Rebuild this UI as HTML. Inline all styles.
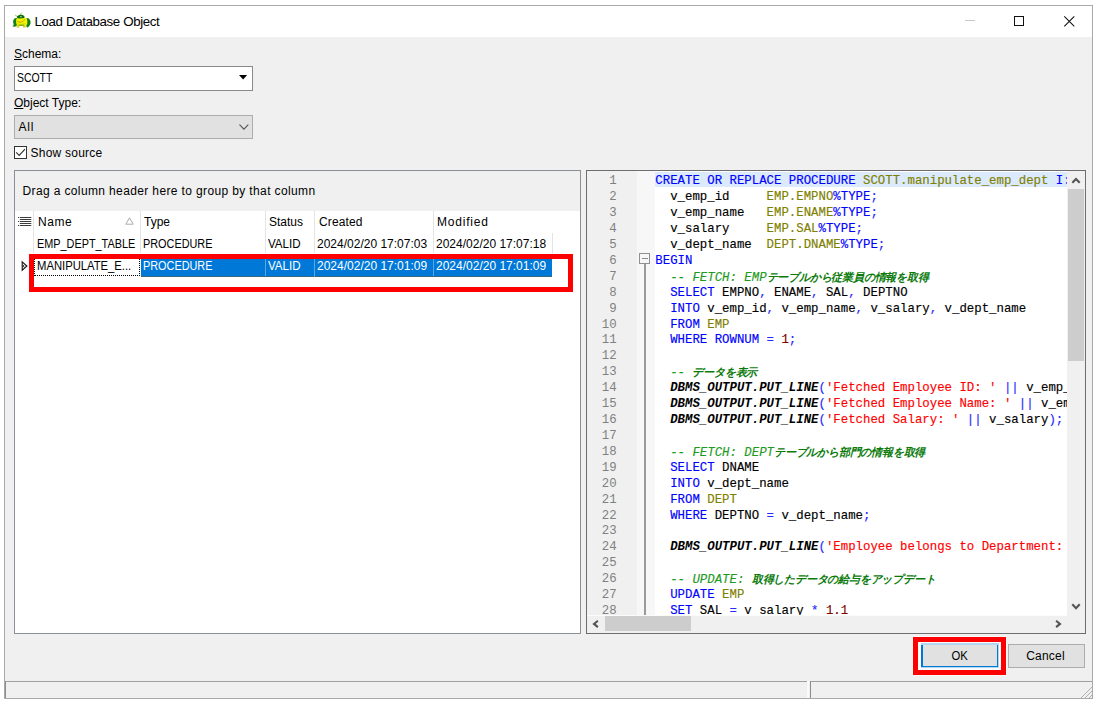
<!DOCTYPE html>
<html>
<head>
<meta charset="utf-8">
<title>Load Database Object</title>
<style>
html,body{margin:0;padding:0;background:#fff;}
body{width:1098px;height:706px;position:relative;overflow:hidden;font-family:"Liberation Sans",sans-serif;font-size:12px;color:#000;}
.abs{position:absolute;}
#win{position:absolute;left:4px;top:5px;width:1087px;height:692px;border:1px solid #a9a9a9;background:#f0f0f0;}
#title{position:absolute;left:0;top:0;width:1087px;height:31px;background:#fff;}
#ttext{position:absolute;font-size:13.3px;letter-spacing:-0.37px;line-height:16px;white-space:nowrap;}
.lbl{position:absolute;white-space:nowrap;line-height:16px;}
.lbl u{text-decoration:underline;text-decoration-thickness:1px;text-underline-offset:1px;}
#cb1{position:absolute;left:13.6px;top:66px;width:237.8px;height:23px;border:1px solid #8a8a8a;background:#fff;}
#cb2{position:absolute;left:13.6px;top:115px;width:237.8px;height:22px;border:1px solid #adadad;background:#e1e1e1;}
.cbt{position:absolute;left:3px;top:4px;line-height:16px;white-space:nowrap;}
#chk{position:absolute;left:13.5px;top:146px;width:11.6px;height:11.4px;border:1px solid #333;background:#fff;}
/* left panel */
#lp{position:absolute;left:13.5px;top:170px;width:567.3px;height:464px;border:1px solid #8a8f98;background:#fff;box-sizing:border-box;}
#grp{position:absolute;left:0;top:0;width:565px;height:40px;background:#f0f0f0;}
.hd{position:absolute;top:40px;height:22px;line-height:22px;white-space:nowrap;}
.vl{position:absolute;width:1px;background:#e4e4e4;}
.cell{position:absolute;height:22px;line-height:22px;white-space:nowrap;overflow:hidden;}
.sel{background:#0078d7;color:#fff;}
.sx{display:inline-block;transform-origin:0 50%;white-space:nowrap;}
/* right panel */
#rp{position:absolute;left:586px;top:170px;width:500px;height:464px;box-sizing:border-box;border:1px solid #6e6e6e;background:#f0f0f0;}
#code{position:absolute;left:587px;top:171px;width:479.5px;height:444px;overflow:hidden;background:#fff;font-family:"Liberation Mono",monospace;}
#gut{position:absolute;left:0;top:0;width:50px;height:444px;background:#f0f0f0;}
#fm{position:absolute;left:50px;top:0;width:17.5px;height:444px;background:#f7f7f7;}
#hl{position:absolute;left:68px;top:1px;width:412px;height:15px;background:#dbeafc;}
.ln{position:absolute;left:0;width:29.6px;height:16px;line-height:16px;text-align:right;color:#808080;font-size:12.37px;margin-top:1.3px;}
.cl{position:absolute;left:68.3px;height:16px;line-height:16px;white-space:pre;font-size:12.37px;color:#000;margin-top:1.3px;-webkit-text-stroke:0.15px;}
.k{color:#0000ff;}
.o{color:#2a2aff;}
.t{color:#808000;}
.n{color:#800000;}
.s{color:#ff0000;}
.c{color:#1e9a1e;font-style:italic;}
.j{color:#0a7a0a;font-style:italic;font-family:"Liberation Sans",sans-serif;font-size:11.1px;letter-spacing:-0.2px;font-weight:bold;-webkit-text-stroke:0;}
.f{font-weight:bold;font-style:italic;-webkit-text-stroke:0;}
#vsb{position:absolute;left:1066.5px;top:171px;width:18.5px;height:444px;background:#f0f0f0;}
#vth{position:absolute;left:1.5px;top:18px;width:16px;height:172px;background:#cdcdcd;}
#hsb{position:absolute;left:587px;top:615px;width:479.5px;height:18px;background:#f0f0f0;box-sizing:border-box;border-top:1px solid #fbfbfb;}
#hth{position:absolute;left:18px;top:0.3px;width:86px;height:15px;background:#cdcdcd;}
#cor{position:absolute;left:1066.5px;top:615px;width:18.5px;height:18px;background:#f0f0f0;}
.btn{position:absolute;box-sizing:border-box;background:#e1e1e1;text-align:center;line-height:16px;}
.red{position:absolute;box-sizing:border-box;border:5px solid #ff0000;}
svg{position:absolute;overflow:visible;}
</style>
</head>
<body>
<div id="win">
  <div id="title"></div>
</div>

<!-- title bar -->
<svg style="left:12px;top:12px" width="20" height="17" viewBox="0 0 20 17">
  <!-- antennae -->
  <path d="M3.4 3.2 L5.6 4.8 M9.6 1.0 L8.0 3.0" stroke="#7cc53c" stroke-width="0.9" stroke-linecap="round" fill="none"/>
  <!-- side bodies -->
  <path d="M4.2 5.9 C1.6 6.0 0.9 8.6 1.3 11.0 C1.5 12.6 2.4 13.6 2.0 14.6 C3.0 15.0 4.4 14.2 5.2 13.0 C5.0 10.6 5.0 8.0 5.6 6.0 Z" fill="#128212"/>
  <path d="M14.2 6.0 C16.8 5.6 18.4 7.6 18.6 10.2 C18.7 12.4 17.4 14.4 15.6 15.6 C14.6 15.2 14.0 14.2 14.2 12.8 C15.0 10.6 15.0 8.0 14.2 6.0 Z" fill="#128212"/>
  <!-- belly -->
  <path d="M4.6 6.6 C6.0 5.2 13.0 5.0 14.6 6.6 C15.8 8.6 15.6 12.0 14.4 13.6 C11.6 14.2 7.0 14.2 5.0 13.4 C3.8 11.2 3.8 8.6 4.6 6.6 Z" fill="#f4f000"/>
  <!-- head -->
  <path d="M4.8 5.4 C5.0 3.8 7.2 2.6 9.2 2.8 C11.4 3.0 12.8 4.2 12.6 5.6 C11.0 6.8 6.2 6.8 4.8 5.4 Z" fill="#0b6e0b"/>
  <ellipse cx="8.9" cy="4.7" rx="0.9" ry="0.6" fill="#b9d6b9"/>
  <!-- mouth / arm shading -->
  <path d="M5.4 9.4 C8.0 10.8 11.0 10.4 12.6 7.2" stroke="#a9a80e" stroke-width="1.0" fill="none"/>
  <path d="M5.6 12.0 C8.0 12.9 11.0 12.6 12.6 11.6" stroke="#c6c40a" stroke-width="0.8" fill="none"/>
  <!-- underside green -->
  <path d="M6.8 13.3 H12.4" stroke="#4aa31a" stroke-width="0.9"/>
  <!-- feet -->
  <path d="M4.6 13.4 L7.0 13.6 L7.6 15.6 L4.6 15.6 Z M11.4 13.8 L13.8 13.4 L13.6 15.6 L10.8 15.6 Z" fill="#d2cd10"/>
  <path d="M0.4 14.4 L2.0 12.6 L2.8 14.6 Z" fill="#1a7a1a"/>
</svg>
<div id="ttext" style="left:34.5px;top:14px;">Load Database Object</div>
<div class="abs" style="left:965px;top:20px;width:10px;height:1px;background:#c8c8c8;"></div>
<div class="abs" style="left:1014px;top:16px;width:8px;height:8px;border:1px solid #111;"></div>
<svg style="left:1064px;top:16px" width="11" height="11" viewBox="0 0 11 11"><path d="M0.3 0.3 L10.3 10.3 M10.3 0.3 L0.3 10.3" stroke="#111" stroke-width="1.05" fill="none"/></svg>

<!-- form -->
<div class="lbl" style="left:14px;top:46px;"><u>S</u>chema:</div>
<div id="cb1"><div class="cbt" style="left:2.2px;top:3px;"><span class="sx" style="transform:scaleX(0.87)">SCOTT</span></div></div>
<svg style="left:239.3px;top:75.4px" width="8.2" height="4.6" viewBox="0 0 8.2 4.6"><path d="M0 0 H8.2 L4.1 4.6 Z" fill="#000"/></svg>
<div class="lbl" style="left:14px;top:95px;"><u>O</u>bject Type:</div>
<div id="cb2"><div class="cbt" style="top:3px;left:3.9px;letter-spacing:0.8px;">All</div></div>
<svg style="left:239px;top:124px" width="10" height="6" viewBox="0 0 10 6"><path d="M0.5 0.7 L4.9 5.1 L9.3 0.7" stroke="#555" stroke-width="1.1" fill="none"/></svg>
<div id="chk"></div>
<svg style="left:15px;top:147px" width="11" height="11" viewBox="0 0 11 11"><path d="M1.2 5.4 L4.2 8.4 L10 2.2" stroke="#333" stroke-width="1.2" fill="none"/></svg>
<div class="lbl" style="left:30.5px;top:145px;letter-spacing:0.24px;">Show source</div>

<!-- left panel -->
<div id="lp">
  <div id="grp"></div>
  <div class="lbl" style="left:8px;top:12px;letter-spacing:0.37px;">Drag a column header here to group by that column</div>
</div>
<!-- header -->
<svg style="left:18px;top:216px" width="14" height="11" viewBox="0 0 14 11">
  <path d="M1.8 1.5 H13.3 M1.8 3.5 H13.3 M1.8 5.5 H13.3 M1.8 7.5 H13.3 M1.8 9.5 H13.3" stroke="#3c3c3c" stroke-width="1"/>
  <path d="M0 1.5 H1 M0 5.5 H1 M0 9.5 H1" stroke="#3c3c3c" stroke-width="1"/>
</svg>
<div class="hd" style="left:38px;top:211px;letter-spacing:0.55px;">Name</div>
<svg style="left:125px;top:217px" width="9" height="8" viewBox="0 0 9 8"><path d="M4.5 0.8 L8.2 7.2 H0.8 Z" stroke="#aaa" stroke-width="1" fill="none"/></svg>
<div class="hd" style="left:144px;top:211px;">Type</div>
<div class="hd" style="left:269px;top:211px;">Status</div>
<div class="hd" style="left:319px;top:211px;letter-spacing:0.13px;">Created</div>
<div class="hd" style="left:437px;top:211px;letter-spacing:0.78px;">Modified</div>
<div class="vl" style="left:33px;top:211px;height:44px;"></div>
<div class="vl" style="left:140px;top:211px;height:44px;"></div>
<div class="vl" style="left:265px;top:211px;height:44px;"></div>
<div class="vl" style="left:314px;top:211px;height:44px;"></div>
<div class="vl" style="left:433px;top:211px;height:44px;"></div>
<div class="vl" style="left:552px;top:233px;height:22px;"></div>
<!-- row 1 -->
<div class="cell" style="left:37px;top:233px;width:103px;"><span class="sx" style="transform:scaleX(0.905)">EMP_DEPT_TABLE</span></div>
<div class="cell" style="left:143px;top:233px;"><span class="sx" style="transform:scaleX(0.906)">PROCEDURE</span></div>
<div class="cell" style="left:268px;top:233px;"><span class="sx" style="transform:scaleX(0.965)">VALID</span></div>
<div class="cell" style="left:317px;top:233px;">2024/02/20 17:07:03</div>
<div class="cell" style="left:436px;top:233px;">2024/02/20 17:07:18</div>
<!-- row 2 -->
<div class="abs sel" style="left:141px;top:255px;width:411px;height:22px;"></div>
<div class="abs" style="left:265px;top:255px;width:1px;height:22px;background:#5aa7e6;"></div>
<div class="abs" style="left:314px;top:255px;width:1px;height:22px;background:#5aa7e6;"></div>
<div class="abs" style="left:433px;top:255px;width:1px;height:22px;background:#5aa7e6;"></div>
<div class="abs" style="left:34px;top:255px;width:106px;height:21px;border:1px dotted #000;box-sizing:border-box;border-top:none;border-left:1px dotted #000;"></div>
<div class="abs" style="left:141px;top:276px;width:411px;height:1px;border-top:1px dotted #6b5a2a;"></div>
<div class="cell" style="left:37px;top:255px;width:103px;"><span class="sx" style="transform:scaleX(0.938)">MANIPULATE_E...</span></div>
<div class="cell" style="left:143px;top:255px;color:#fff;"><span class="sx" style="transform:scaleX(0.906)">PROCEDURE</span></div>
<div class="cell" style="left:268px;top:255px;color:#fff;"><span class="sx" style="transform:scaleX(0.965)">VALID</span></div>
<div class="cell" style="left:317px;top:255px;color:#fff;">2024/02/20 17:01:09</div>
<div class="cell" style="left:436px;top:255px;color:#fff;">2024/02/20 17:01:09</div>
<svg style="left:21px;top:260px" width="8" height="12" viewBox="0 0 8 12"><path d="M1.2 1.8 L5.9 6 L1.2 10.2 Z" stroke="#111" stroke-width="1.1" fill="none"/><path d="M1.6 4.4 L3.6 6 L1.6 7.6 Z" fill="#111"/></svg>
<div class="red" style="left:29px;top:254px;width:544px;height:38px;box-shadow:0 0 0 1px rgba(255,255,255,.45);"></div>

<!-- right panel -->
<div id="rp"></div>
<div id="code">
  <div id="gut"></div>
  <div id="fm"></div>
  <div id="hl"></div>
  <div class="abs" style="left:52px;top:82px;width:9.4px;height:9.3px;border:1px solid #909090;background:#f7f7f7;"></div>
  <div class="abs" style="left:54.5px;top:87.2px;width:6.6px;height:1px;background:#8a8a8a;"></div>
  <div class="abs" style="left:57.2px;top:93.3px;width:1.4px;height:351px;background:#9a9a9a;"></div>
<div class="ln" style="top:1.00px">1</div>
<div class="ln" style="top:16.91px">2</div>
<div class="ln" style="top:32.83px">3</div>
<div class="ln" style="top:48.75px">4</div>
<div class="ln" style="top:64.66px">5</div>
<div class="ln" style="top:80.57px">6</div>
<div class="ln" style="top:96.49px">7</div>
<div class="ln" style="top:112.40px">8</div>
<div class="ln" style="top:128.32px">9</div>
<div class="ln" style="top:144.24px">10</div>
<div class="ln" style="top:160.15px">11</div>
<div class="ln" style="top:176.06px">12</div>
<div class="ln" style="top:191.98px">13</div>
<div class="ln" style="top:207.89px">14</div>
<div class="ln" style="top:223.81px">15</div>
<div class="ln" style="top:239.73px">16</div>
<div class="ln" style="top:255.64px">17</div>
<div class="ln" style="top:271.56px">18</div>
<div class="ln" style="top:287.47px">19</div>
<div class="ln" style="top:303.38px">20</div>
<div class="ln" style="top:319.30px">21</div>
<div class="ln" style="top:335.21px">22</div>
<div class="ln" style="top:351.13px">23</div>
<div class="ln" style="top:367.04px">24</div>
<div class="ln" style="top:382.96px">25</div>
<div class="ln" style="top:398.88px">26</div>
<div class="ln" style="top:414.79px">27</div>
<div class="ln" style="top:430.70px">28</div>
<div class="cl" style="top:1.00px"><span class="k">CREATE OR REPLACE PROCEDURE </span><span class="t">SCOTT.manipulate_emp_dept </span><span class="k">I</span><span class="o">:</span></div>
<div class="cl" style="top:16.91px">  v_emp_id     <span class="t">EMP.EMPNO</span><span class="k">%TYPE</span><span class="o">;</span></div>
<div class="cl" style="top:32.83px">  v_emp_name   <span class="t">EMP.ENAME</span><span class="k">%TYPE</span><span class="o">;</span></div>
<div class="cl" style="top:48.75px">  v_salary     <span class="t">EMP.SAL</span><span class="k">%TYPE</span><span class="o">;</span></div>
<div class="cl" style="top:64.66px">  v_dept_name  <span class="t">DEPT.DNAME</span><span class="k">%TYPE</span><span class="o">;</span></div>
<div class="cl" style="top:80.57px"><span class="k">BEGIN</span></div>
<div class="cl" style="top:96.49px">  <span class="c">-- FETCH: EMP</span><span class="j">テーブルから従業員の情報を取得</span></div>
<div class="cl" style="top:112.40px">  <span class="k">SELECT</span> EMPNO<span class="o">,</span> ENAME<span class="o">,</span> SAL<span class="o">,</span> DEPTNO</div>
<div class="cl" style="top:128.32px">  <span class="k">INTO</span> v_emp_id<span class="o">,</span> v_emp_name<span class="o">,</span> v_salary<span class="o">,</span> v_dept_name</div>
<div class="cl" style="top:144.24px">  <span class="k">FROM </span><span class="t">EMP</span></div>
<div class="cl" style="top:160.15px">  <span class="k">WHERE ROWNUM </span><span class="o">= </span><span class="n">1</span><span class="o">;</span></div>
<div class="cl" style="top:176.06px"></div>
<div class="cl" style="top:191.98px">  <span class="c">-- </span><span class="j">データを表示</span></div>
<div class="cl" style="top:207.89px">  <span class="f">DBMS_OUTPUT.PUT_LINE</span><span class="o">(</span><span class="s">&#x27;Fetched Employee ID: &#x27;</span><span class="o"> || </span>v_emp_</div>
<div class="cl" style="top:223.81px">  <span class="f">DBMS_OUTPUT.PUT_LINE</span><span class="o">(</span><span class="s">&#x27;Fetched Employee Name: &#x27;</span><span class="o"> || </span>v_em</div>
<div class="cl" style="top:239.73px">  <span class="f">DBMS_OUTPUT.PUT_LINE</span><span class="o">(</span><span class="s">&#x27;Fetched Salary: &#x27;</span><span class="o"> || </span>v_salary<span class="o">);</span></div>
<div class="cl" style="top:255.64px"></div>
<div class="cl" style="top:271.56px">  <span class="c">-- FETCH: DEPT</span><span class="j">テーブルから部門の情報を取得</span></div>
<div class="cl" style="top:287.47px">  <span class="k">SELECT</span> DNAME</div>
<div class="cl" style="top:303.38px">  <span class="k">INTO</span> v_dept_name</div>
<div class="cl" style="top:319.30px">  <span class="k">FROM </span><span class="t">DEPT</span></div>
<div class="cl" style="top:335.21px">  <span class="k">WHERE</span> DEPTNO <span class="o">= </span>v_dept_name<span class="o">;</span></div>
<div class="cl" style="top:351.13px"></div>
<div class="cl" style="top:367.04px">  <span class="f">DBMS_OUTPUT.PUT_LINE</span><span class="o">(</span><span class="s">&#x27;Employee belongs to Department: &#x27;</span></div>
<div class="cl" style="top:382.96px"></div>
<div class="cl" style="top:398.88px">  <span class="c">-- UPDATE: </span><span class="j">取得したデータの給与をアップデート</span></div>
<div class="cl" style="top:414.79px">  <span class="k">UPDATE </span><span class="t">EMP</span></div>
<div class="cl" style="top:430.70px">  <span class="k">SET</span> SAL <span class="o">= </span>v_salary <span class="o">* </span><span class="n">1.1</span></div>
</div>
<div id="vsb"><div id="vth"></div></div>
<svg style="left:1071px;top:177px" width="10" height="7" viewBox="0 0 10 7"><path d="M1.3 5.7 L5 1.9 L8.7 5.7" stroke="#555" stroke-width="2.1" fill="none"/></svg>
<svg style="left:1071px;top:603px" width="10" height="7" viewBox="0 0 10 7"><path d="M1.3 1.3 L5 5.2 L8.7 1.3" stroke="#555" stroke-width="2.1" fill="none"/></svg>
<div id="hsb"><div id="hth"></div></div>
<svg style="left:592px;top:619px" width="7" height="10" viewBox="0 0 7 10"><path d="M5.9 1.7 L2.0 4.9 L5.9 8.1" stroke="#555" stroke-width="2.1" fill="none"/></svg>
<svg style="left:1055px;top:619px" width="7" height="10" viewBox="0 0 7 10"><path d="M1.1 1.7 L5.0 4.9 L1.1 8.1" stroke="#555" stroke-width="2.1" fill="none"/></svg>
<div id="cor"></div>

<!-- buttons -->
<div class="btn" style="left:921px;top:643px;width:78px;height:25px;border:2px solid #0078d7;padding-top:3px;"><span class="sx" style="transform:scaleX(0.94);transform-origin:50% 50%;">OK</span></div>
<div class="btn" style="left:1008px;top:644px;width:77px;height:24px;border:1px solid #adadad;padding-top:3px;letter-spacing:0.2px;text-indent:-2px;">Cancel</div>
<div class="red" style="left:913px;top:637px;width:93px;height:38px;box-shadow:inset 0 0 0 3px rgba(255,255,255,.7),0 0 0 1px rgba(255,255,255,.45);"></div>

<!-- status bar -->
<div class="abs" style="left:5px;top:681px;width:802px;height:1px;background:#a0a0a0;"></div>
<div class="abs" style="left:5px;top:681px;width:1px;height:17px;background:#8c8c8c;"></div>
<div class="abs" style="left:807px;top:681px;width:2px;height:17px;background:#fafafa;"></div>
<div class="abs" style="left:810px;top:681px;width:282px;height:1px;background:#a0a0a0;"></div>
<div class="abs" style="left:810px;top:681px;width:1px;height:17px;background:#8c8c8c;"></div>
<svg style="left:1080px;top:686px" width="12" height="12" viewBox="0 0 12 12"><path d="M1 12 L12 1 M5 12 L12 5 M9 12 L12 9" stroke="#b0b0b0" stroke-width="1" fill="none"/></svg>
</body>
</html>
